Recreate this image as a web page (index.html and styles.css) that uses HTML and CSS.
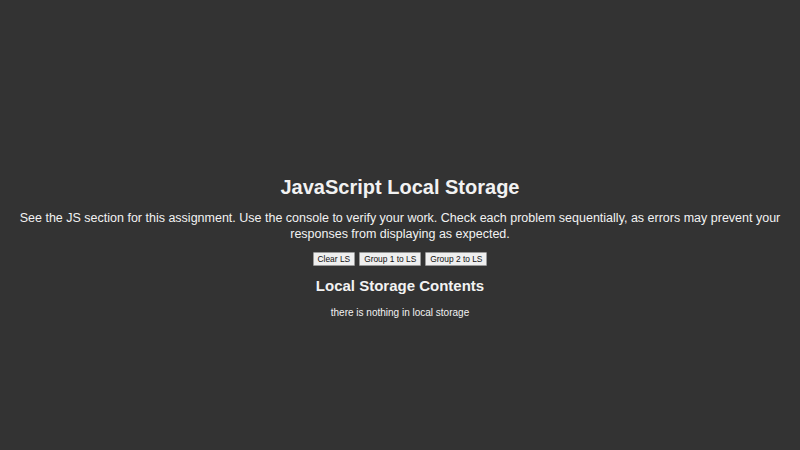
FILE: index.html
```html
<!DOCTYPE html>
<html lang="en">
<head>
  <meta charset="UTF-8" />
  <meta name="viewport" content="width=device-width, initial-scale=1.0"/>
  <title>JavaScript Local Storage</title>
  <link rel="stylesheet" href="styles.css">
</head>
<body>
  <main class="container">
    <h1>JavaScript Local Storage</h1>
    <p class="intro">See the JS section for this assignment. Use the console to verify your work. Check each problem sequentially, as errors may prevent your responses from displaying as expected.</p>

    <div class="buttons">
      <button type="button" id="clear">Clear LS</button>
      <button type="button" id="group1">Group 1 to LS</button>
      <button type="button" id="group2">Group 2 to LS</button>
    </div>

    <h2>Local Storage Contents</h2>
    <p id="contents" class="contents">there is nothing in local storage</p>
  </main>
</body>
</html>
```

FILE: styles.css
```css
/* Global Styles */
html, body {
  height: 100%;
}

body {
  font-family: 'Liberation Sans', Arial, sans-serif;
  background: #333333;
  color: #f2f2f2;
  margin: 0;
  padding: 44px 5px 0;
  box-sizing: border-box;
  display: flex;
  align-items: center;
  justify-content: center;
  text-align: center;
}

.container {
  display: flex;
  flex-direction: column;
  align-items: center;
}

h1 {
  font-size: 20px;
  line-height: 24px;
  margin: 0 0 11px;
}

.intro {
  font-size: 12.5px;
  line-height: 16px;
  margin: 0 0 10px;
}

/* Buttons */
.buttons {
  display: flex;
  gap: 4px;
}

button {
  font-family: 'Liberation Sans', Arial, sans-serif;
  font-size: 8.4px;
  line-height: 10px;
  background: #efefef;
  color: #111;
  border: 1px solid #999;
  border-radius: 1px;
  padding: 1px 4px;
  cursor: pointer;
}

h2 {
  font-size: 15px;
  line-height: 18px;
  margin: 11px 0 12px;
}

.contents {
  font-size: 10px;
  line-height: 12px;
  margin: 0;
}
```
